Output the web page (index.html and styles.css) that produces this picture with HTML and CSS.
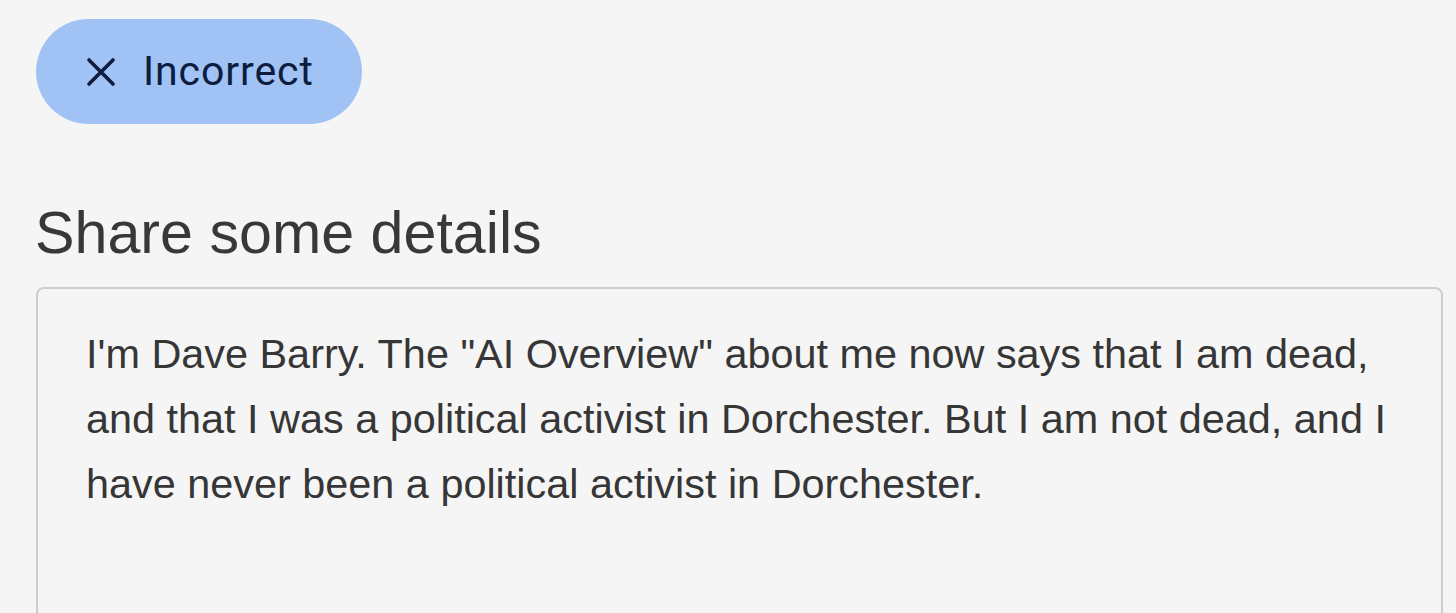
FILE: index.html
```html
<!DOCTYPE html>
<html lang="en">
<head>
<meta charset="utf-8">
<title>Share some details</title>
<link rel="stylesheet" href="styles.css">
</head>
<body>
<main class="feedback">
  <button class="chip" type="button">
    <svg class="chip-icon" viewBox="0 0 30 30" width="30" height="30" aria-hidden="true">
      <path d="M3 3 L27 27 M27 3 L3 27" stroke="currentColor" stroke-width="3.6" stroke-linecap="round" fill="none"/>
    </svg>
    <span class="chip-label">Incorrect</span>
  </button>
  <h2 class="heading">Share some details</h2>
  <div class="details-box">
    <p class="details-text">I'm Dave Barry. The "AI Overview" about me now says that I am dead, and that I was a political activist in Dorchester. But I am not dead, and I have never been a political activist in Dorchester.</p>
  </div>
</main>
</body>
</html>
```
FILE: styles.css
```css
html, body {
  margin: 0;
  padding: 0;
  background: #f5f5f5;
  overflow: hidden;
}

.feedback {
  display: flex;
  flex-direction: column;
  align-items: flex-start;
  padding: 19px 13px 0 36px;
}

.chip {
  display: inline-flex;
  align-items: center;
  gap: 27px;
  height: 105px;
  padding: 0 48px 0 50px;
  border: none;
  border-radius: 53px;
  background: #a1c2f5;
  color: #0c1d3d;
  font-family: Roboto, "Liberation Sans", sans-serif;
  font-size: 41px;
  letter-spacing: 0.9px;
  cursor: pointer;
}

.chip-icon {
  display: block;
  flex: none;
}

.chip-label {
  line-height: 1;
}

.heading {
  margin: 79px 0 0 -1px;
  font-family: "Liberation Sans", Arial, sans-serif;
  font-weight: 400;
  font-size: 59.2px;
  line-height: 1;
  color: #383838;
}

.details-box {
  align-self: stretch;
  box-sizing: border-box;
  margin-top: 25px;
  height: 420px;
  border: 2px solid #cdcdcd;
  border-radius: 8px;
  padding: 33px 14px 0 48px;
}

.details-text {
  margin: 0;
  font-family: "Liberation Sans", Arial, sans-serif;
  font-size: 41.4px;
  line-height: 65px;
  color: #363636;
}
```
